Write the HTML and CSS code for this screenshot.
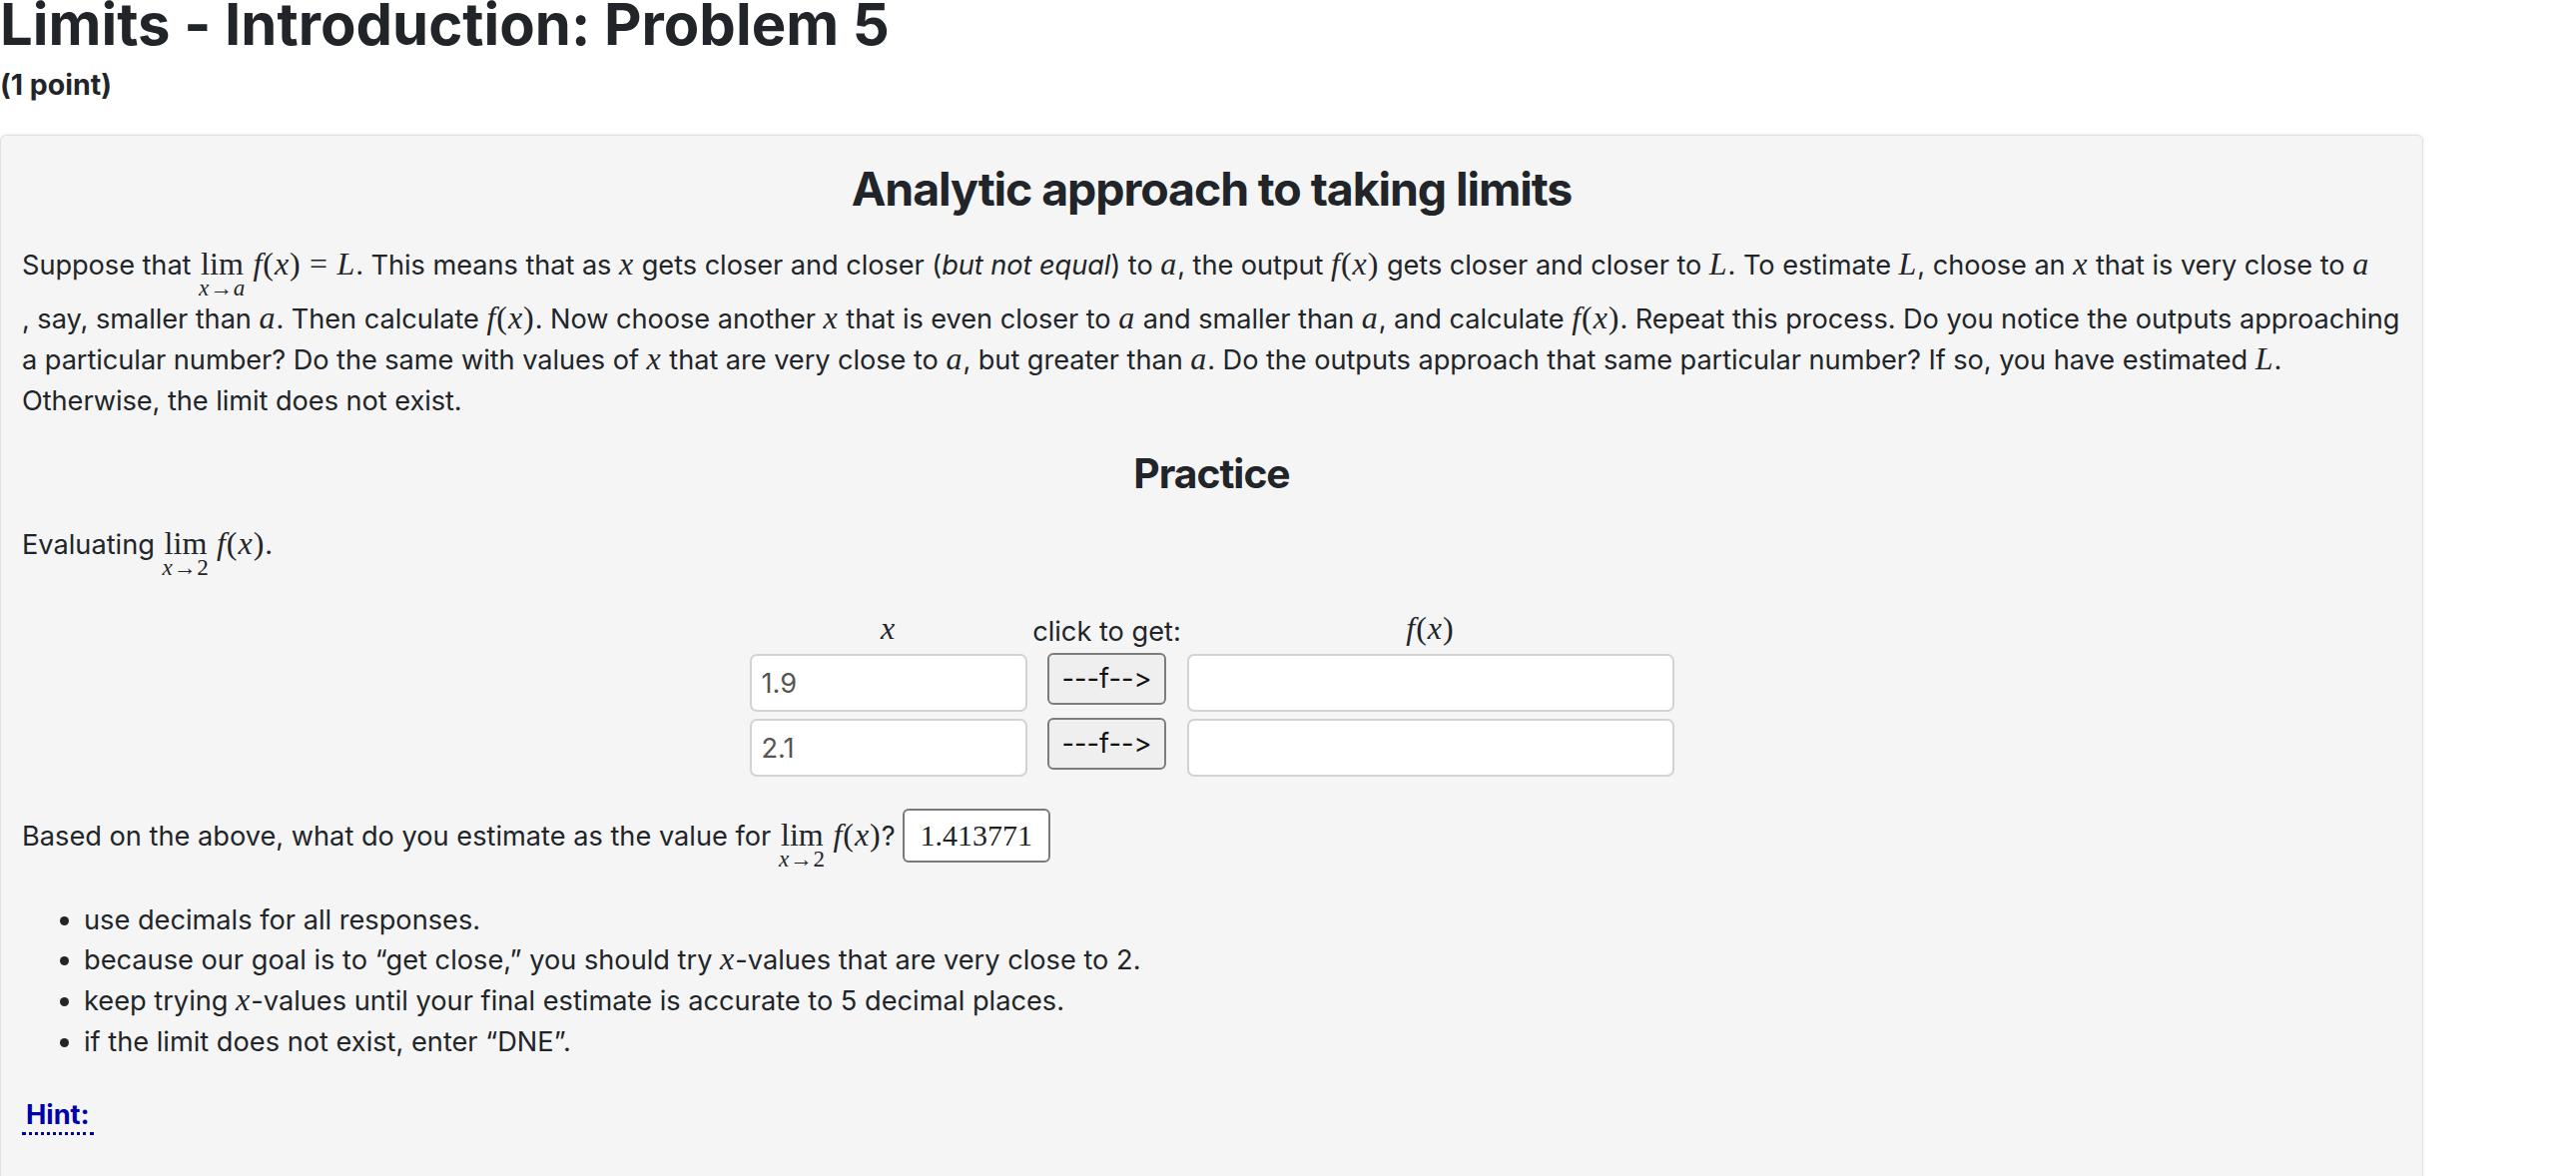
FILE: index.html
```html
<!DOCTYPE html>
<html lang="en">
<head>
<meta charset="utf-8">
<title>Limits - Introduction: Problem 5</title>
<link rel="stylesheet" href="styles.css">
</head>
<body>
<div class="page">
  <h2 class="title">Limits - Introduction: Problem 5</h2>
  <div class="points">(1 point)</div>
  <div class="problem">
    <h3 class="sec-title">Analytic approach to taking limits</h3>
    <p class="para intro">Suppose that <span class="lim"><span class="lim-op">lim</span><span class="lim-sub"><i>x</i>→<i>a</i></span></span> <span class="m"><i>f</i>(<i>x</i>)<span class="rel">=</span><i>L</i></span>. This means that as <span class="m"><i>x</i></span> gets closer and closer (<em>but not equal</em>) to <span class="m"><i>a</i></span>, the output <span class="m"><i>f</i>(<i>x</i>)</span> gets closer and closer to <span class="m"><i>L</i></span>. To estimate <span class="m"><i>L</i></span>, choose an <span class="m"><i>x</i></span> that is very close to <span class="m"><i>a</i></span><br>, say, smaller than <span class="m"><i>a</i></span>. Then calculate <span class="m"><i>f</i>(<i>x</i>)</span>. Now choose another <span class="m"><i>x</i></span> that is even closer to <span class="m"><i>a</i></span> and smaller than <span class="m"><i>a</i></span>, and calculate <span class="m"><i>f</i>(<i>x</i>)</span>. Repeat this process. Do you notice the outputs approaching<br>a particular number? Do the same with values of <span class="m"><i>x</i></span> that are very close to <span class="m"><i>a</i></span>, but greater than <span class="m"><i>a</i></span>. Do the outputs approach that same particular number? If so, you have estimated <span class="m"><i>L</i></span>.<br>Otherwise, the limit does not exist.</p>

    <h4 class="practice">Practice</h4>
    <p class="para eval">Evaluating <span class="lim"><span class="lim-op">lim</span><span class="lim-sub"><i>x</i>→2</span></span> <span class="m"><i>f</i>(<i>x</i>)</span>.</p>

    <div class="calc">
      <div class="calc-head">
        <span class="m"><i>x</i></span>
        <span>click to get:</span>
        <span class="m"><i>f</i>(<i>x</i>)</span>
      </div>
      <div class="calc-rows">
        <input class="field" type="text" value="1.9">
        <button class="fbtn" type="button">---f--&gt;</button>
        <input class="field" type="text" value="">
        <input class="field" type="text" value="2.1">
        <button class="fbtn" type="button">---f--&gt;</button>
        <input class="field" type="text" value="">
      </div>
    </div>

    <p class="para based">Based on the above, what do you estimate as the value for <span class="lim"><span class="lim-op">lim</span><span class="lim-sub"><i>x</i>→2</span></span> <span class="m"><i>f</i>(<i>x</i>)</span>?<span class="answer">1.413771</span></p>

    <ul class="notes">
      <li>use decimals for all responses.</li>
      <li>because our goal is to “get close,” you should try <span class="m"><i>x</i></span>-values that are very close to 2.</li>
      <li>keep trying <span class="m"><i>x</i></span>-values until your final estimate is accurate to 5 decimal places.</li>
      <li>if the limit does not exist, enter “DNE”.</li>
    </ul>

    <div class="hint-wrap"><a class="hint">Hint:</a></div>
  </div>
</div>
</body>
</html>
```
FILE: styles.css
```css
* { box-sizing: border-box; }
html, body { margin: 0; padding: 0; background: #ffffff; }
body {
  font-family: Inter, "Noto Sans", sans-serif;
  font-size: 27.2px;
  line-height: 1.5;
  color: #212529;
  overflow: hidden;
  height: 1178px;
  font-feature-settings: "calt" 0, "liga" 0;
  font-variant-ligatures: none;
}
.page { width: 2427px; }
.title {
  font-size: 58px;
  font-weight: 700;
  line-height: 1.2;
  margin: -10px 0 0;
}
.points {
  font-size: 28.5px;
  font-weight: 700;
  line-height: 40.8px;
  margin-top: 5px;
}
.problem {
  margin-top: 30px;
  background: #f5f5f5;
  border: 1px solid #e1e1e1;
  border-radius: 6px;
  box-shadow: 0 -1px 3px rgba(0,0,0,0.06);
  padding: 25px 21px 300px;
}
.sec-title {
  font-size: 46.5px;
  font-weight: 700;
  letter-spacing: -0.024em;
  line-height: 57px;
  text-align: center;
  margin: 0 0 27.6px;
}
.para { margin: 0 0 27.2px; }
.intro { white-space: nowrap; letter-spacing: -0.002em; }
.practice {
  font-size: 40.8px;
  font-weight: 700;
  letter-spacing: -0.025em;
  line-height: 1.2;
  text-align: center;
  margin: 1px 0 27px;
}
.m {
  font-family: "Liberation Serif", "DejaVu Serif", serif;
  font-size: 32px;
  line-height: 1;
  letter-spacing: 0.03em;
}
.m i, .lim i { font-style: italic; }
.rel { margin: 0 0.26em; }
.lim {
  display: inline-flex;
  flex-direction: column;
  align-items: center;
  font-family: "Liberation Serif", "DejaVu Serif", serif;
  line-height: 1;
  vertical-align: baseline;
  letter-spacing: 0;
}
.lim-op { font-size: 32px; line-height: 1; }
.lim-sub { font-size: 23px; line-height: 1; margin-top: -3px; letter-spacing: 0.03em; }

.calc { margin: 35px 0 0; }
.calc-head, .calc-rows {
  display: grid;
  grid-template-columns: 278px 152px 488px;
  column-gap: 4px;
  justify-content: center;
}
.calc-head { height: 40px; text-align: center; margin-top: -2px; }
.calc-rows { row-gap: 7px; margin-top: 2px; }
.field {
  height: 58px;
  border: 2px solid #d3d3d3;
  border-radius: 7px;
  background: #ffffff;
  font-family: Inter, "Noto Sans", sans-serif;
  font-size: 27.2px;
  color: #555555;
  padding: 2px 10px 0;
  outline: none;
}
.fbtn {
  justify-self: center;
  align-self: start;
  margin-top: -1px;
  width: 119px;
  height: 52px;
  background: #efefef;
  border: 2px solid #7d7d7d;
  border-radius: 6px;
  font-family: Inter, "Noto Sans", sans-serif;
  font-size: 27.2px;
  font-feature-settings: "calt" 0, "liga" 0;
  font-variant-ligatures: none;
  color: #111111;
  padding: 0;
}
.based { margin-top: 32px; }
.answer {
  display: inline-block;
  margin-left: 7px;
  font-family: "Liberation Serif", "DejaVu Serif", serif;
  font-size: 30px;
  line-height: 1;
  padding: 10px 16px;
  border: 2px solid #7a7a7a;
  border-radius: 6px;
  background: #ffffff;
  color: #222222;
}
.notes {
  margin: 30px 0 27.2px;
  padding-left: 62px;
}
.hint-wrap { margin-top: 32px; }
.hint {
  display: inline-block;
  color: #0000aa;
  font-weight: 700;
  text-decoration: none;
  line-height: 1;
  padding: 0 4px 4px;
  border-bottom: 3px dotted #0000aa;
}
```
